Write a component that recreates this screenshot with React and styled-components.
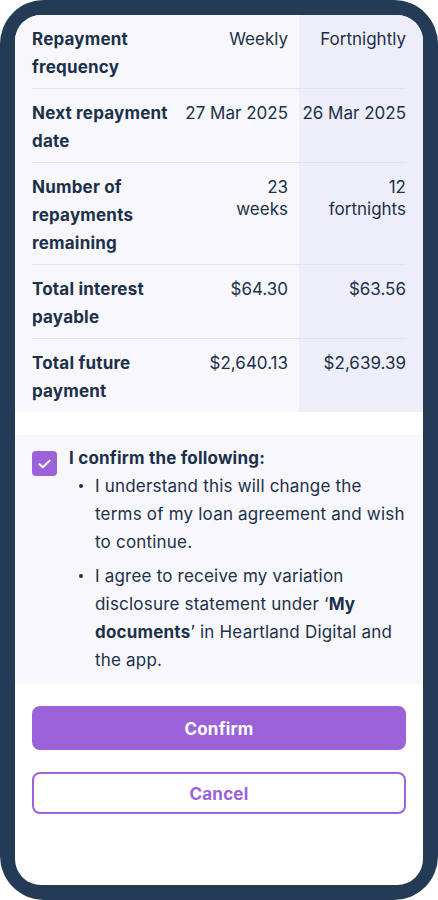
import React from "react";
import styled, { createGlobalStyle } from "styled-components";

const Global = createGlobalStyle`
  html, body { margin: 0; padding: 0; background: #ffffff; }
  body { font-family: Inter, "Noto Sans", Arial, sans-serif; -webkit-font-smoothing: antialiased; }
  * { box-sizing: border-box; }
`;

const Frame = styled.div`
  width: 438px;
  height: 900px;
  background: #233b54;
  border-radius: 44px;
  padding: 15px;
`;

const Screen = styled.div`
  height: 100%;
  background: #ffffff;
  border-radius: 26px;
  overflow: hidden;
  display: flex;
  flex-direction: column;
  color: #1c3049;
  letter-spacing: 0.2px;
`;

const TableWrap = styled.div`
  background: linear-gradient(to right, #f7f7fc 284px, #eeeefa 284px);
  padding: 0 17px;
`;

const Table = styled.table`
  width: 100%;
  border-collapse: collapse;
  table-layout: fixed;
`;

const Row = styled.tr`
  border-bottom: ${(p) => (p.$last ? "none" : "1px solid #e2e3ec")};
`;

const Label = styled.th`
  text-align: left;
  vertical-align: top;
  font-size: 17px;
  font-weight: 700;
  line-height: 28px;
  padding: 10px 0 7px;
`;

const Value = styled.td`
  text-align: right;
  vertical-align: top;
  font-size: 17px;
  font-weight: 400;
  line-height: 22px;
  letter-spacing: 0;
  padding: 13px ${(p) => (p.$tint ? "0" : "11px")} 7px 0;
  white-space: nowrap;
`;

const Confirm = styled.div`
  margin-top: 23px;
  background: #f7f7fc;
  padding: 9px 17px 10px;
  display: grid;
  grid-template-columns: 25px 1fr;
  column-gap: 12px;
`;

const Check = styled.div`
  width: 25px;
  height: 25px;
  margin-top: 7px;
  border-radius: 4px;
  background: #9b62d9;
  display: flex;
  align-items: center;
  justify-content: center;
`;

const Heading = styled.div`
  font-size: 17px;
  font-weight: 700;
  line-height: 28px;
`;

const List = styled.ul`
  list-style: none;
  margin: 0;
  padding: 0;
  display: flex;
  flex-direction: column;
  gap: 6px;
`;

const Item = styled.li`
  display: grid;
  grid-template-columns: 26px 1fr;
  font-size: 17px;
  line-height: 28px;
  &::before {
    content: "";
    width: 4px;
    height: 4px;
    border-radius: 50%;
    background: #1c3049;
    margin: 12px 0 0 10px;
  }
`;

const Actions = styled.div`
  padding: 22px 17px 0;
  display: flex;
  flex-direction: column;
  gap: 22px;
`;

const Button = styled.button`
  height: ${(p) => (p.$outline ? "42px" : "44px")};
  border-radius: 8px;
  border: ${(p) => (p.$outline ? "2px solid #9b62d9" : "none")};
  background: ${(p) => (p.$outline ? "#ffffff" : "#9b62d9")};
  color: ${(p) => (p.$outline ? "#9b62d9" : "#ffffff")};
  font-family: Inter, Arial, sans-serif;
  font-size: 17px;
  font-weight: 700;
  letter-spacing: 0.2px;
  padding-top: 2px;
  cursor: pointer;
`;

const rows = [
  ["Repayment frequency", "Weekly", "Fortnightly"],
  ["Next repayment date", "27 Mar 2025", "26 Mar 2025"],
  ["Number of repayments remaining", ["23", "weeks"], ["12", "fortnights"]],
  ["Total interest payable", "$64.30", "$63.56"],
  ["Total future payment", "$2,640.13", "$2,639.39"],
];

const renderVal = (v) =>
  Array.isArray(v) ? (
    <>
      {v[0]}
      <br />
      {v[1]}
    </>
  ) : (
    v
  );

export default function App() {
  return (
    <>
      <Global />
      <Frame>
        <Screen>
          <TableWrap>
            <Table>
              <colgroup>
                <col style={{ width: 143 }} />
                <col style={{ width: 124 }} />
                <col style={{ width: 107 }} />
              </colgroup>
              <tbody>
                {rows.map((r, i) => (
                  <Row key={i} $last={i === rows.length - 1}>
                    <Label>{r[0]}</Label>
                    <Value>{renderVal(r[1])}</Value>
                    <Value $tint>{renderVal(r[2])}</Value>
                  </Row>
                ))}
              </tbody>
            </Table>
          </TableWrap>
          <Confirm>
            <Check>
              <svg width="13" height="10" viewBox="0 0 13 10" fill="none">
                <path d="M1.5 5.2 L4.8 8.3 L11.5 1.7" stroke="#fff" strokeWidth="2" strokeLinecap="round" strokeLinejoin="round" />
              </svg>
            </Check>
            <div>
              <Heading>I confirm the following:</Heading>
              <List>
                <Item>
                  <span>I understand this will change the terms of my loan agreement and wish to continue.</span>
                </Item>
                <Item>
                  <span>
                    I agree to receive my variation disclosure statement under ‘<b>My documents</b>’ in Heartland Digital and the app.
                  </span>
                </Item>
              </List>
            </div>
          </Confirm>
          <Actions>
            <Button>Confirm</Button>
            <Button $outline>Cancel</Button>
          </Actions>
        </Screen>
      </Frame>
    </>
  );
}
